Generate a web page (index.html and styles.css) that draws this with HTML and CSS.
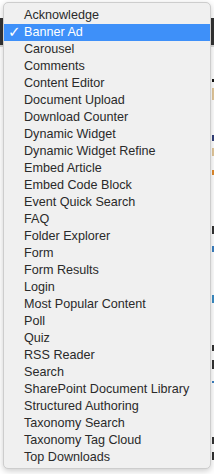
FILE: index.html
```html
<!DOCTYPE html>
<html lang="en">
<head>
    <meta charset="UTF-8">
    <meta name="viewport" content="width=device-width, initial-scale=1.0">
    <title>Widget Picker</title>
    <link rel="stylesheet" href="styles.css">
</head>
<body>
    <div class="page">
        <div class="toolbar"></div>
        <div class="rule"></div>
        <!-- bits of the page peeking out at the right of the popup -->
        <div class="content">
            <div class="mark m1"></div>
            <div class="mark m2"></div>
            <div class="mark m3"></div>
            <div class="mark m4"></div>
            <div class="mark m5"></div>
            <div class="mark m6"></div>
            <div class="mark m7"></div>
            <div class="mark m8"></div>
            <div class="mark m9"></div>
            <div class="mark m10"></div>
            <div class="mark m11"></div>
            <div class="mark m12"></div>
            <div class="mark m13"></div>
        </div>
    </div>

    <ul class="menu">
        <li class="item">Acknowledge</li>
        <li class="item selected"><span class="check">✓</span>Banner Ad</li>
        <li class="item">Carousel</li>
        <li class="item">Comments</li>
        <li class="item">Content Editor</li>
        <li class="item">Document Upload</li>
        <li class="item">Download Counter</li>
        <li class="item">Dynamic Widget</li>
        <li class="item">Dynamic Widget Refine</li>
        <li class="item">Embed Article</li>
        <li class="item">Embed Code Block</li>
        <li class="item">Event Quick Search</li>
        <li class="item">FAQ</li>
        <li class="item">Folder Explorer</li>
        <li class="item">Form</li>
        <li class="item">Form Results</li>
        <li class="item">Login</li>
        <li class="item">Most Popular Content</li>
        <li class="item">Poll</li>
        <li class="item">Quiz</li>
        <li class="item">RSS Reader</li>
        <li class="item">Search</li>
        <li class="item">SharePoint Document Library</li>
        <li class="item">Structured Authoring</li>
        <li class="item">Taxonomy Search</li>
        <li class="item">Taxonomy Tag Cloud</li>
        <li class="item">Top Downloads</li>
    </ul>
</body>
</html>
```

FILE: styles.css
```css
body {
    margin: 0;
    width: 214px;
    height: 474px;
    overflow: hidden;
    background-color: #fff;
    font-family: 'Liberation Sans', Arial, sans-serif;
    position: relative;
}

.page {
    padding-top: 18px;
}

.toolbar {
    height: 27px;
    background-color: #333;
}

.rule {
    height: 2px;
    background-color: #d6d6d6;
}

.mark {
    width: 2px;
    margin-left: 212px;
    background-color: #333;
}

.m1 { margin-top: 32px; height: 3px; background-color: #111; }
.m2 { margin-top: 6px; height: 12px; background-color: #e2c79a; }
.m3 { margin-top: 35px; height: 6px; background-color: #33407a; }
.m4 { margin-top: 7px; height: 8px; background-color: #e2c79a; }
.m5 { margin-top: 14px; height: 5px; background-color: #e08a2c; }
.m6 { margin-top: 51px; height: 8px; }
.m7 { margin-top: 12px; height: 6px; background-color: #3a7fc0; }
.m8 { margin-top: 43px; height: 8px; background-color: #3a8cc4; }
.m9 { margin-top: 42px; height: 6px; }
.m10 { margin-top: 9px; height: 9px; }
.m11 { margin-top: 12px; height: 2px; background-color: #3a7fc0; }
.m12 { margin-top: 54px; height: 7px; }
.m13 { margin-top: 8px; height: 8px; }

/* popup list over the page */
.menu {
    position: absolute;
    left: 3px;
    top: 2px;
    width: 208px;
    height: 467px;
    box-sizing: border-box;
    margin: 0;
    padding: 4px 0 0;
    list-style: none;
    background-color: #f0f0f0;
    border: 1px solid #cdcdcd;
    border-radius: 5px;
    box-shadow: 0 2px 6px rgba(0, 0, 0, 0.2);
}

.item {
    position: relative;
    height: 17px;
    line-height: 17px;
    padding-left: 20px;
    font-size: 12.6px;
    color: #2a2a2a;
    white-space: nowrap;
}

.item.selected {
    background-color: #3e90f9;
    color: #fff;
}

.check {
    position: absolute;
    left: 4px;
    top: 0;
    font-family: 'DejaVu Sans', sans-serif;
    font-size: 15px;
}
```
